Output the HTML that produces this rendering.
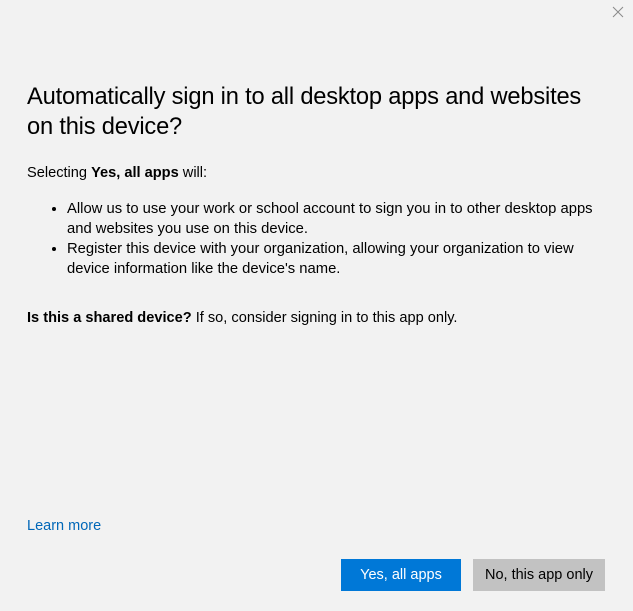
<!DOCTYPE html>
<html><head><style>
html,body{margin:0;padding:0;}
body{width:633px;height:611px;background:#f2f2f2;position:relative;overflow:hidden;font-family:"Liberation Sans",sans-serif;color:#000;}
.x{position:absolute;left:612px;top:6px;}
h1{position:absolute;left:27px;top:82px;margin:0;font-weight:normal;font-size:23.7px;line-height:30px;width:590px;letter-spacing:-0.2px;}
.t{position:absolute;left:27px;font-size:14.6px;line-height:20px;}
ul{position:absolute;left:49px;top:199px;margin:0;padding:0 0 0 18px;font-size:14.8px;line-height:20px;width:570px;}
.lm{position:absolute;left:27px;top:516px;color:#0067b8;font-size:14.5px;line-height:20px;}
.b{position:absolute;top:559px;height:32px;line-height:32px;text-align:center;font-size:14.5px;}
</style></head><body>
<svg class="x" width="12" height="12" viewBox="0 0 12 12"><path d="M1 1L11 11M11 1L1 11" stroke="#8a8a8a" stroke-width="1"/></svg>
<h1>Automatically sign in to all desktop apps and websites<br>on this device?</h1>
<div class="t" style="top:163px">Selecting <b>Yes, all apps</b> will:</div>
<ul>
<li>Allow us to use your work or school account to sign you in to other desktop apps<br>and websites you use on this device.</li>
<li>Register this device with your organization, allowing your organization to view<br>device information like the device's name.</li>
</ul>
<div class="t" style="top:308px"><b>Is this a shared device?</b> If so, consider signing in to this app only.</div>
<div class="lm">Learn more</div>
<div class="b" style="left:341px;width:120px;background:#0078d7;color:#fff">Yes, all apps</div>
<div class="b" style="left:473px;width:132px;background:#c2c2c2;color:#000">No, this app only</div>
</body></html>
